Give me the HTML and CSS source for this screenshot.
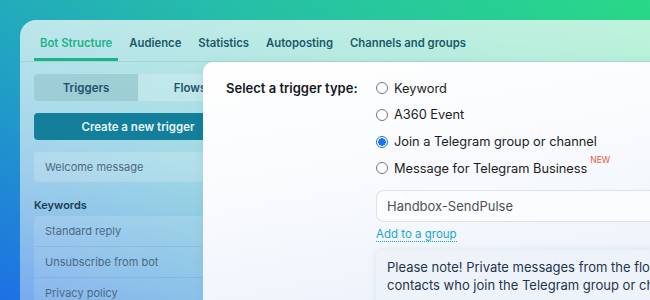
FILE: index.html
```html
<!DOCTYPE html>
<html lang="en">
<head>
    <meta charset="UTF-8">
    <title>Bot Structure</title>
    <link rel="stylesheet" href="styles.css">
</head>
<body>

<div class="app">
    <div class="tabs">
        <span class="tab active">Bot Structure</span>
        <span class="tab">Audience</span>
        <span class="tab">Statistics</span>
        <span class="tab">Autoposting</span>
        <span class="tab">Channels and groups</span>
    </div>

    <div class="workspace">
        <div class="sidebar">
            <div class="sidebar-inner">
                <div class="switch">
                    <span class="switch-item on">Triggers</span>
                    <span class="switch-item">Flows</span>
                </div>
                <button class="create-btn">Create a new trigger</button>
                <div class="item single">Welcome message</div>
                <div class="group-title">Keywords</div>
                <div class="list">
                    <div class="item">Standard reply</div>
                    <div class="item">Unsubscribe from bot</div>
                    <div class="item">Privacy policy</div>
                </div>
            </div>
        </div>

        <div class="card">
            <div class="form-row">
                <div class="form-label">Select a trigger type:</div>
                <div class="form-field">
                    <label class="radio"><span class="dot"></span>Keyword</label>
                    <label class="radio"><span class="dot"></span>A360 Event</label>
                    <label class="radio"><span class="dot checked"></span>Join a Telegram group or channel</label>
                    <label class="radio"><span class="dot"></span>Message for Telegram Business <sup class="new">NEW</sup></label>

                    <div class="select">Handbox-SendPulse</div>
                    <a class="add-link">Add to a group</a>

                    <div class="note">
                        Please note! Private messages from the flow will be sent to<br>
                        contacts who join the Telegram group or channel.
                    </div>
                </div>
            </div>
        </div>
    </div>
</div>

</body>
</html>
```

FILE: styles.css
```css
body {
    margin: 0;
    width: 650px;
    height: 300px;
    overflow: hidden;
    font-family: Inter, "Noto Sans", sans-serif;
    background: linear-gradient(30deg, #1e70e4 0%, #21a2c4 35%, #26c0a6 65%, #29d987 100%);
}

.app {
    margin: 20px 0 0 20px;
    height: 280px;
    border-radius: 16px 0 0 0;
    background: linear-gradient(180deg, rgba(255, 255, 255, 0.7) 0%, rgba(255, 255, 255, 0.58) 50%, rgba(255, 255, 255, 0.4) 100%);
    display: flex;
    flex-direction: column;
    overflow: hidden;
}

/* Tabs */
.tabs {
    display: flex;
    gap: 5px;
    padding: 0 14px;
    border-bottom: 1px solid rgba(120, 190, 190, 0.35);
    height: 41px;
    align-items: flex-end;
}

.tab {
    padding: 0 6px 8px;
    font-size: 11.3px;
    font-weight: 600;
    line-height: 14px;
    color: #1b5a6a;
    border-bottom: 3px solid transparent;
}

.tab.active {
    color: #1db388;
    border-bottom-color: #1db388;
}

/* Main area */
.workspace {
    flex: 1;
    display: flex;
    min-height: 0;
}

.sidebar {
    width: 183px;
    overflow: hidden;
    flex-shrink: 0;
}

.sidebar-inner {
    width: 208px;
    padding: 12px 0 0 14px;
}

.switch {
    display: flex;
    height: 27px;
    border-radius: 4px;
    background: rgba(255, 255, 255, 0.2);
    overflow: hidden;
}

.switch-item {
    flex: 1;
    display: flex;
    align-items: center;
    justify-content: center;
    font-size: 11.5px;
    font-weight: 600;
    color: #1e5468;
}

.switch-item.on {
    background: rgba(110, 170, 180, 0.4);
}

.create-btn {
    display: block;
    width: 100%;
    height: 27px;
    margin-top: 12px;
    border: none;
    border-radius: 4px;
    background-color: #137f9b;
    color: #e6f4f7;
    font-family: inherit;
    font-size: 11.5px;
    font-weight: 600;
}

.item {
    height: 30px;
    display: flex;
    align-items: center;
    padding-left: 11px;
    font-size: 11px;
    color: #4b6a82;
}

.item.single {
    margin-top: 12px;
    border-radius: 4px;
    background: rgba(255, 255, 255, 0.18);
}

.group-title {
    margin: 16px 0 4px;
    font-size: 11px;
    font-weight: 600;
    color: #1f3b55;
}

.list {
    background: rgba(255, 255, 255, 0.13);
    border-radius: 4px 4px 0 0;
}

.list .item + .item {
    border-top: 1px solid rgba(120, 160, 210, 0.35);
}

/* Card */
.card {
    flex: 1;
    background: linear-gradient(170deg, #ffffff 0%, #f8fafd 45%, #e9f0fb 100%);
    border-radius: 10px 0 0 0;
    padding: 18px 0 0 23px;
    box-shadow: -2px 0 8px rgba(40, 80, 120, 0.06);
}

.form-row {
    display: flex;
}

.form-label {
    width: 150px;
    flex-shrink: 0;
    font-size: 13px;
    font-weight: 600;
    line-height: 16px;
    color: #15191e;
}

.form-field {
    flex: 1;
    min-width: 0;
}

.radio {
    display: flex;
    align-items: center;
    height: 16px;
    margin-bottom: 10.8px;
    font-size: 12.8px;
    color: #1b1d22;
    white-space: nowrap;
}

.dot {
    width: 10px;
    height: 10px;
    border: 1px solid #767676;
    border-radius: 50%;
    margin-right: 6px;
    background: #fff;
    box-sizing: content-box;
}

.dot.checked {
    border-color: #1a73e8;
    background: radial-gradient(circle, #1a73e8 0 3.5px, #fff 4px);
}

.new {
    font-size: 8.5px;
    color: #f04e3a;
    margin-left: 3px;
    align-self: flex-start;
    margin-top: -5px;
}

.select {
    margin-top: 14px;
    height: 30px;
    border: 1px solid #dde2e8;
    border-radius: 8px 0 0 8px;
    border-right: none;
    background: #fbfcfe;
    display: flex;
    align-items: center;
    padding-left: 10px;
    font-size: 13px;
    color: #4e5257;
}

.add-link {
    display: inline-block;
    margin-top: 5px;
    font-size: 11.5px;
    color: #1ba3cb;
    border-bottom: 1px dotted #1ba3cb;
    line-height: 14px;
}

.note {
    margin-top: 8px;
    padding: 8px 0 0 11px;
    height: 60px;
    background: #eef3f9;
    border-radius: 6px 0 0 0;
    box-shadow: 0 0 6px rgba(60, 100, 150, 0.12);
    font-size: 13px;
    line-height: 18px;
    color: #1e3550;
    white-space: nowrap;
}
```
